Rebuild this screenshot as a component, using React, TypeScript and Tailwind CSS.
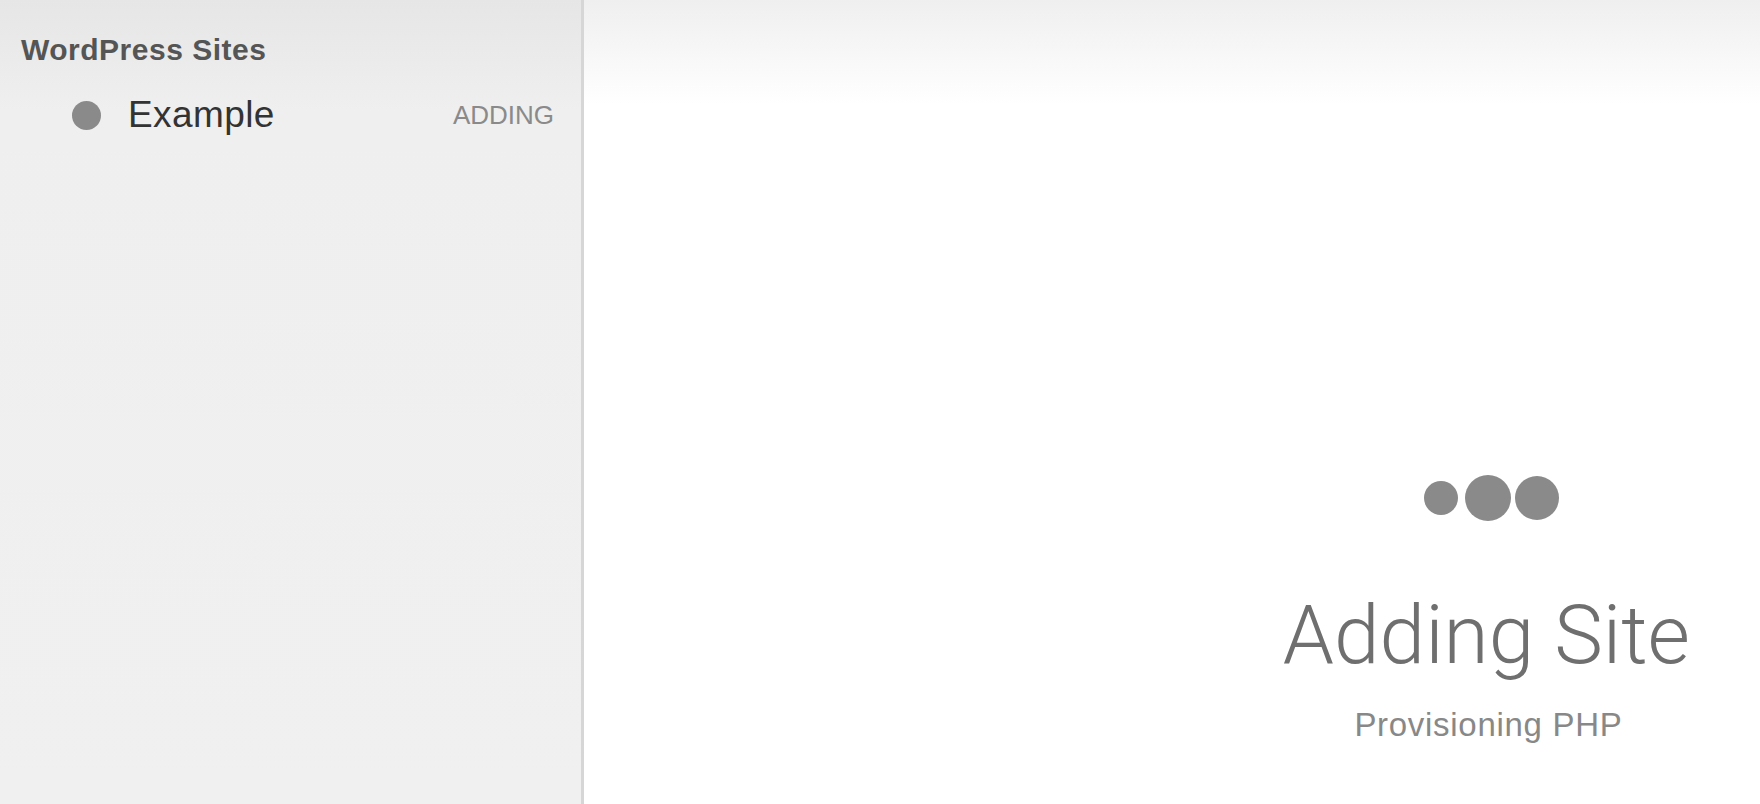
function LoadingDots() {
  return (
    <svg width="136" height="48" viewBox="0 0 136 48" className="ml-[12px] block">
      <circle cx="17" cy="24" r="17" fill="#8a8a8a" />
      <circle cx="64" cy="24" r="23" fill="#8a8a8a" />
      <circle cx="113" cy="24" r="22" fill="#8a8a8a" />
    </svg>
  );
}

function Sidebar() {
  return (
    <aside className="flex h-full w-[584px] shrink-0 flex-col border-r-[3px] border-[#d6d6d6] bg-[linear-gradient(to_bottom,#e6e6e6_0px,#efefef_110px,#f0f0f0_100%)]">
      <h2 className="pl-[21px] pt-[35px] text-[30px] font-bold leading-none tracking-[0.5px] text-[#555555]">
        WordPress Sites
      </h2>
      <div className="mt-[31px] flex items-baseline pl-[72px] pr-[27px]">
        <span className="mt-[1px] h-[29px] w-[29px] shrink-0 self-center rounded-full bg-[#8a8a8a]" />
        <span className="ml-[27px] text-[37px] leading-none tracking-[0.4px] text-[#333333]">Example</span>
        <span className="ml-auto self-center text-[26px] leading-none text-[#8a8a8a]">ADDING</span>
      </div>
    </aside>
  );
}

export default function App() {
  return (
    <div className="flex h-[804px] w-[1760px] overflow-hidden bg-white font-['Liberation_Sans',Arial,sans-serif]">
      <Sidebar />
      <main className="flex flex-1 justify-end bg-[linear-gradient(to_bottom,#efefef_0px,#ffffff_105px,#ffffff_100%)] pr-[70px]">
        <div className="flex flex-col items-center pt-[474px]">
          <LoadingDots />
          <h1 className="mt-[72px] font-['Roboto','Liberation_Sans',sans-serif] text-[82px] font-light leading-none text-[#6f6f6f]">
            Adding Site
          </h1>
          <p className="ml-[4px] mt-[32px] text-[33px] leading-none tracking-[0.7px] text-[#888888]">
            Provisioning PHP
          </p>
        </div>
      </main>
    </div>
  );
}
